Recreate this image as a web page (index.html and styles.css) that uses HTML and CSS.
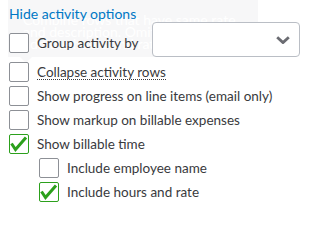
FILE: index.html
```html
<!DOCTYPE html>
<html lang="en">
<head>
    <meta charset="UTF-8">
    <title>Activity options</title>
    <link rel="stylesheet" href="styles.css">
</head>
<body>
    <div class="panel">
        <div class="tooltip">Combine rows that have same rate and description. Omit dates, and add the hours and rates.</div>

        <a class="toggle-link" href="#">Hide activity options</a>

        <div class="row row-group">
            <span class="box"></span>
            <span class="label">Group activity by</span>
            <div class="select">
                <svg class="chevron" width="14" height="8" viewBox="0 0 14 8">
                    <path d="M1.2 1.2 L7 6.6 L12.8 1.2" fill="none" stroke="#6b6c72" stroke-width="2.8"/>
                </svg>
            </div>
        </div>

        <div class="row">
            <span class="box"></span>
            <span class="label dotted">Collapse activity rows</span>
        </div>
        <div class="row">
            <span class="box"></span>
            <span class="label">Show progress on line items (email only)</span>
        </div>
        <div class="row">
            <span class="box"></span>
            <span class="label">Show markup on billable expenses</span>
        </div>
        <div class="row">
            <span class="box checked">
                <svg width="18" height="18" viewBox="0 0 18 18">
                    <path d="M1.5 8.5 L5.5 14.5 L16 2.5" fill="none" stroke="#2ca01c" stroke-width="3"/>
                </svg>
            </span>
            <span class="label">Show billable time</span>
        </div>
        <div class="row sub">
            <span class="box"></span>
            <span class="label">Include employee name</span>
        </div>
        <div class="row sub">
            <span class="box checked">
                <svg width="18" height="18" viewBox="0 0 18 18">
                    <path d="M1.5 8.5 L5.5 14.5 L16 2.5" fill="none" stroke="#2ca01c" stroke-width="3"/>
                </svg>
            </span>
            <span class="label">Include hours and rate</span>
        </div>
    </div>
</body>
</html>
```

FILE: styles.css
```css
body {
    margin: 0;
    background: #fff;
    font-family: Lato, "Open Sans", sans-serif;
    font-size: 13.5px;
    color: #393a3d;
}

.panel {
    position: relative;
    padding: 6px 0 0 9px;
}

.tooltip {
    position: absolute;
    left: 8px;
    top: 0;
    width: 250px;
    height: 57px;
    padding: 14px 15px 0 15px;
    box-sizing: border-box;
    background: #f7f7f8;
    color: #fff;
    font-size: 14px;
    line-height: 12px;
}

.tooltip::after {
    content: "";
    position: absolute;
    left: 12px;
    bottom: -6px;
    border-left: 6px solid transparent;
    border-right: 6px solid transparent;
    border-top: 6px solid #f7f7f8;
}

.toggle-link {
    position: relative;
    display: block;
    width: max-content;
    color: #0077c5;
    text-decoration: none;
    font-size: 14px;
    line-height: 16px;
}

.row {
    position: relative;
    display: flex;
    align-items: center;
    height: 24px;
}

.row-group {
    width: 291px;
    height: 35px;
    margin-bottom: 3px;
}

.row-group .box,
.row-group .label {
    margin-top: 6px;
}

.box {
    width: 18px;
    height: 18px;
    border: 1px solid #8d9096;
    border-radius: 2px;
    background: #fff;
    flex: none;
    display: flex;
    align-items: center;
    justify-content: center;
}

.box.checked {
    border-color: #2ca01c;
}

.label {
    margin-left: 8px;
    white-space: nowrap;
}

.dotted {
    border-bottom: 1px dotted #393a3d;
    line-height: 14px;
}

.sub {
    padding-left: 30px;
}

.select {
    width: 148px;
    height: 35px;
    margin-left: auto;
    border: 1px solid #babec5;
    border-radius: 4px;
    background: #fff;
    display: flex;
    align-items: center;
    justify-content: flex-end;
    padding: 1px 9px 0 0;
    box-sizing: border-box;
}
```
